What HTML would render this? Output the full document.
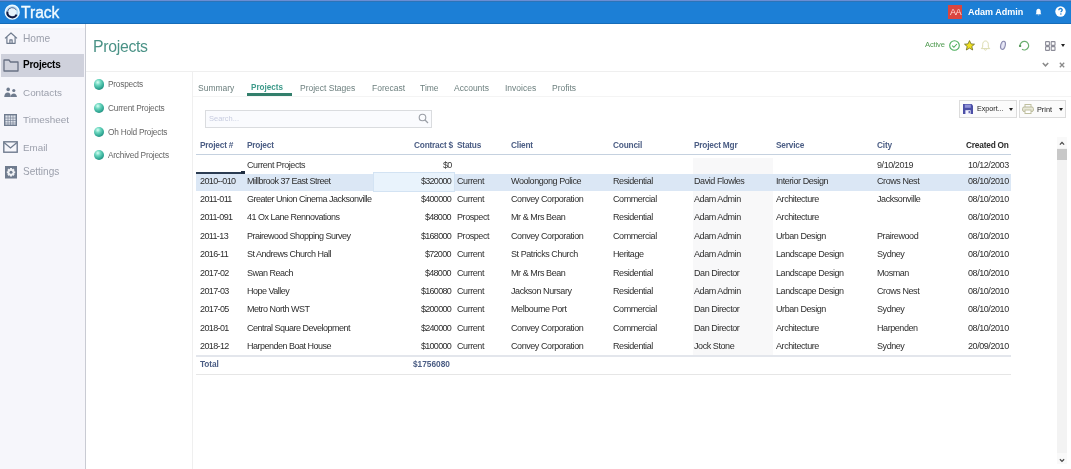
<!DOCTYPE html>
<html><head><meta charset="utf-8"><style>
html,body{margin:0;padding:0;}
body{width:1071px;height:469px;overflow:hidden;position:relative;background:#fff;font-family:"Liberation Sans", sans-serif;}
.t{position:absolute;white-space:nowrap;will-change:transform;}
.b{position:absolute;}
.ball{width:10.4px;height:10.4px;border-radius:50%;background:radial-gradient(circle at 38% 30%, #d8fff4 0%, #6ad6be 30%, #2ea592 65%, #17665e 100%);}
</style></head><body>
<div class="b" style="left:0px;top:0px;width:1071px;height:24px;background:#1c7fd6;"></div>
<div class="b" style="left:0px;top:0px;width:1071px;height:1.3px;background:#6a8ed4;"></div>
<div class="b" style="left:0px;top:1.3px;width:1071px;height:0.8px;background:#2c74b8;"></div>
<div class="b" style="left:0px;top:23px;width:1071px;height:1px;background:#156cb8;"></div>
<svg class="b" style="left:3px;top:3px" width="18" height="18" viewBox="0 0 18 18"><circle cx="9.2" cy="9.2" r="6.9" fill="#b9dcf4" stroke="#eefaff" stroke-width="1.5"/><circle cx="9.4" cy="9" r="4" fill="#e6f2fa"/><path d="M4.4 8.6 A4.9 4.9 0 0 0 13.6 11.6" stroke="#121a42" stroke-width="2" fill="none"/><path d="M4.6 8.4 A4.7 4.7 0 0 1 13.4 7.2" stroke="#3a4a7a" stroke-width="0.8" fill="none"/></svg>
<div class="t" style="left:20.5px;top:4.79px;font-size:15.6px;line-height:15.6px;color:#f2fbff;font-weight:normal;-webkit-text-stroke:0.35px #f2fbff;">Track</div>
<div class="b" style="left:948px;top:5px;width:14px;height:14px;background:#d9463f;"></div>
<div class="t" style="left:949.5px;top:7.71px;font-size:9.2px;line-height:9.2px;color:#ffd8d0;font-weight:normal;letter-spacing:-0.6px;">AA</div>
<div class="t" style="left:968px;top:7.98px;font-size:9.0px;line-height:9.0px;color:#ffffff;font-weight:bold;">Adam Admin</div>
<svg class="b" style="left:1035px;top:8px" width="7" height="8" viewBox="0 0 7 8"><path d="M3.5 0.8 C1.8 0.8 1.3 2.2 1.3 3.6 L1.3 5.2 L0.6 6.2 L6.4 6.2 L5.7 5.2 L5.7 3.6 C5.7 2.2 5.2 0.8 3.5 0.8Z M2.6 6.8 L4.4 6.8 C4.3 7.5 2.7 7.5 2.6 6.8Z" fill="#ffffff"/></svg>
<svg class="b" style="left:1055px;top:6px" width="11" height="11" viewBox="0 0 11 11"><circle cx="5.5" cy="5.5" r="5.2" fill="#ffffff"/><path d="M3.8 4.2 C3.8 3 4.6 2.5 5.5 2.5 C6.5 2.5 7.2 3.1 7.2 4 C7.2 5.1 5.9 5.2 5.9 6.3" stroke="#1a7ed3" stroke-width="1.3" fill="none"/><circle cx="5.9" cy="8.1" r="0.75" fill="#1a7ed3"/></svg>
<div class="b" style="left:0px;top:24px;width:85px;height:445px;background:#f6f6fb;"></div>
<div class="b" style="left:0px;top:24px;width:85px;height:4px;background:#fcfdff;"></div>
<div class="b" style="left:85px;top:24px;width:1px;height:445px;background:#c9cbd3;"></div>
<div class="b" style="left:1px;top:54px;width:83px;height:23px;background:#cfd1dc;"></div>
<div class="t" style="left:22.6px;top:33.57px;font-size:10.2px;line-height:10.2px;color:#9b9fab;font-weight:normal;">Home</div>
<div class="t" style="left:22.6px;top:60.33px;font-size:10px;line-height:10px;color:#000000;font-weight:bold;letter-spacing:-0.25px;">Projects</div>
<div class="t" style="left:22.6px;top:88.22px;font-size:9.9px;line-height:9.9px;color:#9b9fab;font-weight:normal;">Contacts</div>
<div class="t" style="left:22.6px;top:115.28px;font-size:9.95px;line-height:9.95px;color:#9b9fab;font-weight:normal;">Timesheet</div>
<div class="t" style="left:22.6px;top:142.90px;font-size:9.8px;line-height:9.8px;color:#9b9fab;font-weight:normal;">Email</div>
<div class="t" style="left:22.6px;top:167.19px;font-size:10.05px;line-height:10.05px;color:#9b9fab;font-weight:normal;">Settings</div>
<svg class="b" style="left:4px;top:32px" width="14" height="12" viewBox="0 0 14 12"><path d="M1 6.4 L7 1 L13 6.4 M2.9 4.8 L2.9 11.3 L11.1 11.3 L11.1 4.8 M5.9 11.3 L5.9 7.8 L8.1 7.8 L8.1 11.3" stroke="#6f7b8e" stroke-width="1.2" fill="none" stroke-linejoin="round"/></svg>
<svg class="b" style="left:3px;top:59px" width="16" height="13" viewBox="0 0 16 13"><path d="M1 1 L6 1 L7.5 3 L15 3 L15 12 L1 12 Z" stroke="#6a7184" stroke-width="1.3" fill="none" stroke-linejoin="round"/></svg>
<svg class="b" style="left:3px;top:86px" width="16" height="12" viewBox="0 0 16 12"><circle cx="5.2" cy="3.4" r="1.8" fill="#6f7b8e"/><circle cx="10.8" cy="4.5" r="1.6" fill="#6f7b8e"/><path d="M1.2 11 C1.4 8 2.8 6.6 4.8 6.6 C6.6 6.6 7.6 8 7.8 11 Z" fill="#6f7b8e"/><path d="M7.6 11 C7.9 8.6 9.2 7.6 10.8 7.6 C12.6 7.6 13.6 8.8 14 11 Z" fill="#6f7b8e"/></svg>
<svg class="b" style="left:4px;top:113.5px" width="13" height="12" viewBox="0 0 13 12"><rect x="0.7" y="0.7" width="11.6" height="10.6" fill="#dde2ea" stroke="#6f7b8e" stroke-width="1.4"/><path d="M4 1 V11 M6.5 1 V11 M9 1 V11 M1 4 H12 M1 6.5 H12 M1 9 H12" stroke="#6f7b8e" stroke-width="0.6"/></svg>
<svg class="b" style="left:3px;top:141px" width="15" height="12" viewBox="0 0 15 12"><rect x="0.8" y="0.8" width="13.4" height="10.4" fill="none" stroke="#6f7b8e" stroke-width="1.4"/><path d="M1 1.5 L7.5 7 L14 1.5" stroke="#6f7b8e" stroke-width="1.3" fill="none"/></svg>
<svg class="b" style="left:4.5px;top:166px" width="12" height="12.5" viewBox="0 0 12 12.5"><rect x="0" y="0" width="12" height="12.5" fill="#6f7b8e"/><path d="M10.20,5.31 L10.20,7.19 L8.74,7.47 L8.80,7.32 L9.63,8.55 L8.30,9.88 L7.07,9.05 L7.22,8.99 L6.94,10.45 L5.06,10.45 L4.78,8.99 L4.93,9.05 L3.70,9.88 L2.37,8.55 L3.20,7.32 L3.26,7.47 L1.80,7.19 L1.80,5.31 L3.26,5.03 L3.20,5.18 L2.37,3.95 L3.70,2.62 L4.93,3.45 L4.78,3.51 L5.06,2.05 L6.94,2.05 L7.22,3.51 L7.07,3.45 L8.30,2.62 L9.63,3.95 L8.80,5.18 L8.74,5.03Z" fill="#eef0f4"/><circle cx="6" cy="6.25" r="1.5" fill="#6f7b8e"/></svg>
<div class="t" style="left:93px;top:38.63px;font-size:15.8px;line-height:15.8px;color:#4a9286;font-weight:normal;letter-spacing:-0.3px;">Projects</div>
<div class="b" style="left:86px;top:71px;width:985px;height:1px;background:#efefef;"></div>
<div class="b" style="left:192px;top:72px;width:1px;height:397px;background:#efefef;"></div>
<div class="b ball" style="left:93.5px;top:79.3px;"></div>
<div class="t" style="left:108px;top:80.27px;font-size:8.3px;line-height:8.3px;color:#666666;font-weight:normal;letter-spacing:-0.22px;">Prospects</div>
<div class="b ball" style="left:93.5px;top:102.8px;"></div>
<div class="t" style="left:108px;top:103.77px;font-size:8.3px;line-height:8.3px;color:#666666;font-weight:normal;letter-spacing:-0.22px;">Current Projects</div>
<div class="b ball" style="left:93.5px;top:126.6px;"></div>
<div class="t" style="left:108px;top:127.57px;font-size:8.3px;line-height:8.3px;color:#666666;font-weight:normal;letter-spacing:-0.22px;">Oh Hold Projects</div>
<div class="b ball" style="left:93.5px;top:150.1px;"></div>
<div class="t" style="left:108px;top:151.07px;font-size:8.3px;line-height:8.3px;color:#666666;font-weight:normal;letter-spacing:-0.22px;">Archived Projects</div>
<div class="t" style="left:197.8px;top:84.00px;font-size:8.5px;line-height:8.5px;color:#6c7f7e;font-weight:normal;">Summary</div>
<div class="t" style="left:371.5px;top:84.00px;font-size:8.5px;line-height:8.5px;color:#6c7f7e;font-weight:normal;">Forecast</div>
<div class="t" style="left:420px;top:84.00px;font-size:8.5px;line-height:8.5px;color:#6c7f7e;font-weight:normal;">Time</div>
<div class="t" style="left:453.9px;top:84.00px;font-size:8.5px;line-height:8.5px;color:#6c7f7e;font-weight:normal;">Accounts</div>
<div class="t" style="left:505.2px;top:84.00px;font-size:8.5px;line-height:8.5px;color:#6c7f7e;font-weight:normal;">Invoices</div>
<div class="t" style="left:551.9px;top:84.00px;font-size:8.5px;line-height:8.5px;color:#6c7f7e;font-weight:normal;">Profits</div>
<div class="t" style="left:300px;top:84.00px;font-size:8.5px;line-height:8.5px;color:#6c7f7e;font-weight:normal;">Project Stages</div>
<div class="t" style="left:251px;top:84.20px;font-size:8.15px;line-height:8.15px;color:#3d9a8a;font-weight:bold;">Projects</div>
<div class="b" style="left:247px;top:93.3px;width:45px;height:2.5px;background:#337f6c;"></div>
<div class="b" style="left:193px;top:96px;width:878px;height:1px;background:#f4f4f4;"></div>
<div class="b" style="left:205px;top:110px;width:227px;height:18px;background:#fafbfe;border:1px solid #dadcdf;box-sizing:border-box;"></div>
<div class="t" style="left:209px;top:115.15px;font-size:7.5px;line-height:7.5px;color:#c8cde0;font-weight:normal;">Search...</div>
<svg class="b" style="left:418px;top:113px" width="11" height="11" viewBox="0 0 11 11"><circle cx="4.5" cy="4.5" r="3.3" stroke="#9a9ea6" stroke-width="1.1" fill="none"/><path d="M7 7 L10 10" stroke="#9a9ea6" stroke-width="1.3"/></svg>
<div class="b" style="left:959px;top:100px;width:57.5px;height:17.5px;background:#fbfbfb;border:1px solid #dcdcdc;box-sizing:border-box;"></div>
<div class="b" style="left:1019px;top:100px;width:47px;height:17.5px;background:#fbfbfb;border:1px solid #dcdcdc;box-sizing:border-box;"></div>
<svg class="b" style="left:963px;top:104px" width="10" height="10" viewBox="0 0 10 10"><path d="M0 0 H8.6 L10 1.4 V10 H0 Z" fill="#4b4fa6"/><rect x="1.8" y="0.6" width="6" height="3.2" fill="#8f92d8"/><rect x="2.4" y="6.2" width="5.2" height="3.8" fill="#f4f4ff"/><rect x="5.6" y="7" width="1.2" height="2.2" fill="#4b4fa6"/></svg>
<div class="t" style="left:976.5px;top:106.25px;font-size:7.15px;line-height:7.15px;color:#222;font-weight:normal;">Export...</div>
<div class="b" style="left:1009px;top:107.5px;width:0;height:0;border-left:2.5px solid transparent;border-right:2.5px solid transparent;border-top:3px solid #222;"></div>
<svg class="b" style="left:1022px;top:104px" width="12" height="10" viewBox="0 0 12 10"><rect x="3" y="0.5" width="6" height="3" fill="none" stroke="#bfbf9f" stroke-width="1"/><rect x="0.6" y="3" width="10.8" height="4.5" rx="1.5" fill="#e8e8d8" stroke="#b9b99a" stroke-width="1"/><rect x="3" y="6" width="6" height="3.5" fill="#fff" stroke="#bfbf9f" stroke-width="1"/></svg>
<div class="t" style="left:1036.5px;top:106.12px;font-size:7.3px;line-height:7.3px;color:#222;font-weight:normal;">Print</div>
<div class="b" style="left:1059px;top:107.5px;width:0;height:0;border-left:2.5px solid transparent;border-right:2.5px solid transparent;border-top:3px solid #222;"></div>
<div class="t" style="left:924.9px;top:41.37px;font-size:7.6px;line-height:7.6px;color:#4f9a50;font-weight:normal;letter-spacing:-0.15px;">Active</div>
<svg class="b" style="left:949px;top:40px" width="11" height="11" viewBox="0 0 11 11"><circle cx="5.5" cy="5.5" r="4.8" stroke="#4cae5c" stroke-width="1.1" fill="none"/><path d="M3.2 5.6 L4.9 7.3 L7.9 4" stroke="#4cae5c" stroke-width="1.1" fill="none"/></svg>
<svg class="b" style="left:964px;top:40px" width="11" height="11" viewBox="0 0 11 11"><path d="M5.5 0.6 L7 3.9 L10.5 4.2 L7.8 6.5 L8.7 10 L5.5 8.1 L2.3 10 L3.2 6.5 L0.5 4.2 L4 3.9 Z" fill="#f0e020" stroke="#6b6b20" stroke-width="0.8" stroke-linejoin="round"/></svg>
<svg class="b" style="left:980px;top:39.5px" width="11" height="11" viewBox="0 0 11 11"><path d="M5.5 1 C3.4 1 2.7 2.8 2.7 4.5 L2.7 7 L1.3 8.6 L9.7 8.6 L8.3 7 L8.3 4.5 C8.3 2.8 7.6 1 5.5 1Z M4.3 9.3 C4.5 10.4 6.5 10.4 6.7 9.3" stroke="#d8d8a8" stroke-width="0.9" fill="none"/></svg>
<svg class="b" style="left:999px;top:39.5px" width="9" height="11" viewBox="0 0 9 11"><ellipse cx="4" cy="5.3" rx="2.3" ry="4.2" transform="rotate(14 4 5.3)" fill="#d6d6ea" stroke="#8a8aae" stroke-width="1"/><path d="M4.5 2.4 L3.6 7.8" stroke="#f6f6ff" stroke-width="0.9"/></svg>
<svg class="b" style="left:1018px;top:40px" width="12" height="11" viewBox="0 0 12 11"><path d="M2 5.8 A4.3 4.3 0 1 1 4 9.3" stroke="#6aae6e" stroke-width="1.2" fill="none"/><circle cx="2.1" cy="5.9" r="1.2" fill="#5a9a5e"/></svg>
<svg class="b" style="left:1044.5px;top:40.5px" width="11" height="10" viewBox="0 0 11 10"><rect x="0.6" y="0.6" width="3.8" height="3.8" rx="0.5" fill="none" stroke="#8c8c98" stroke-width="1.1"/><rect x="6.2" y="0.6" width="3.8" height="3.8" rx="0.5" fill="none" stroke="#8c8c98" stroke-width="1.1"/><rect x="0.6" y="5.6" width="3.8" height="3.8" rx="0.5" fill="none" stroke="#8c8c98" stroke-width="1.1"/><rect x="6.2" y="5.6" width="3.8" height="3.8" rx="0.5" fill="none" stroke="#8c8c98" stroke-width="1.1"/></svg>
<div class="b" style="left:1061px;top:44px;width:0;height:0;border-left:2.5px solid transparent;border-right:2.5px solid transparent;border-top:3px solid #222;"></div>
<svg class="b" style="left:1042px;top:62px" width="7" height="5" viewBox="0 0 7 5"><path d="M0.8 0.9 L3.5 3.8 L6.2 0.9" stroke="#8a8a8a" stroke-width="1.5" fill="none"/></svg>
<svg class="b" style="left:1058.5px;top:62px" width="6" height="6" viewBox="0 0 6 6"><path d="M0.8 0.8 L5.2 5.2 M5.2 0.8 L0.8 5.2" stroke="#8a8a8a" stroke-width="1.3"/></svg>
<div class="t" style="left:199.7px;top:140.67px;font-size:8.3px;line-height:8.3px;color:#4b5d84;font-weight:bold;letter-spacing:-0.2px;">Project #</div>
<div class="t" style="left:247px;top:140.67px;font-size:8.3px;line-height:8.3px;color:#4b5d84;font-weight:bold;letter-spacing:-0.2px;">Project</div>
<div class="t" style="right:618.3px;top:140.67px;font-size:8.3px;line-height:8.3px;color:#4b5d84;font-weight:bold;letter-spacing:-0.2px;">Contract $</div>
<div class="t" style="left:457.4px;top:140.67px;font-size:8.3px;line-height:8.3px;color:#4b5d84;font-weight:bold;letter-spacing:-0.2px;">Status</div>
<div class="t" style="left:511.2px;top:140.67px;font-size:8.3px;line-height:8.3px;color:#4b5d84;font-weight:bold;letter-spacing:-0.2px;">Client</div>
<div class="t" style="left:612.9px;top:140.67px;font-size:8.3px;line-height:8.3px;color:#4b5d84;font-weight:bold;letter-spacing:-0.2px;">Council</div>
<div class="t" style="left:694.3px;top:140.67px;font-size:8.3px;line-height:8.3px;color:#4b5d84;font-weight:bold;letter-spacing:-0.2px;">Project Mgr</div>
<div class="t" style="left:775.6px;top:140.67px;font-size:8.3px;line-height:8.3px;color:#4b5d84;font-weight:bold;letter-spacing:-0.2px;">Service</div>
<div class="t" style="left:877.2px;top:140.67px;font-size:8.3px;line-height:8.3px;color:#4b5d84;font-weight:bold;letter-spacing:-0.2px;">City</div>
<div class="t" style="right:62.5px;top:140.67px;font-size:8.3px;line-height:8.3px;color:#2a2a2a;font-weight:bold;letter-spacing:-0.2px;">Created On</div>
<div class="b" style="left:196px;top:154px;width:814.5px;height:1px;background:#c5d1df;"></div>
<div class="b" style="left:692.5px;top:157.5px;width:80px;height:197.5px;background:#f8f8f9;"></div>
<div class="t" style="left:247px;top:160.98px;font-size:9.0px;line-height:9.0px;color:#333;font-weight:normal;letter-spacing:-0.43px;">Current Projects</div>
<div class="t" style="right:619.8px;top:160.98px;font-size:9.0px;line-height:9.0px;color:#333;font-weight:normal;letter-spacing:-0.72px;">$0</div>
<div class="t" style="left:877.2px;top:160.98px;font-size:9.0px;line-height:9.0px;color:#333;font-weight:normal;letter-spacing:-0.43px;">9/10/2019</div>
<div class="t" style="right:62.200000000000045px;top:160.98px;font-size:9.0px;line-height:9.0px;color:#333;font-weight:normal;letter-spacing:-0.43px;">10/12/2003</div>
<div class="b" style="left:196px;top:172.3px;width:46px;height:1.6px;background:#2b3c52;"></div>
<div class="b" style="left:241px;top:170.6px;width:3.5px;height:3.5px;background:#1f2d40;"></div>
<div class="b" style="left:196px;top:174px;width:814.5px;height:17.3px;background:#dbe7f5;"></div>
<div class="b" style="left:373px;top:172px;width:81.5px;height:19.8px;background:#e9f3fc;border:1px solid #d3e3f3;box-sizing:border-box;"></div>
<div class="t" style="left:199.7px;top:176.68px;font-size:9.0px;line-height:9.0px;color:#2e2e2e;font-weight:normal;letter-spacing:-0.62px;">2010--010</div>
<div class="t" style="left:247px;top:176.68px;font-size:9.0px;line-height:9.0px;color:#2e2e2e;font-weight:normal;letter-spacing:-0.5px;">Millbrook 37 East Street</div>
<div class="t" style="right:619.8px;top:176.68px;font-size:9.0px;line-height:9.0px;color:#2e2e2e;font-weight:normal;letter-spacing:-0.72px;">$320000</div>
<div class="t" style="left:457.4px;top:176.68px;font-size:9.0px;line-height:9.0px;color:#2e2e2e;font-weight:normal;letter-spacing:-0.43px;">Current</div>
<div class="t" style="left:511.2px;top:176.68px;font-size:9.0px;line-height:9.0px;color:#2e2e2e;font-weight:normal;letter-spacing:-0.43px;">Woolongong Police</div>
<div class="t" style="left:612.9px;top:176.68px;font-size:9.0px;line-height:9.0px;color:#2e2e2e;font-weight:normal;letter-spacing:-0.43px;">Residential</div>
<div class="t" style="left:694.3px;top:176.68px;font-size:9.0px;line-height:9.0px;color:#2e2e2e;font-weight:normal;letter-spacing:-0.43px;">David Flowles</div>
<div class="t" style="left:775.6px;top:176.68px;font-size:9.0px;line-height:9.0px;color:#2e2e2e;font-weight:normal;letter-spacing:-0.43px;">Interior Design</div>
<div class="t" style="left:877.2px;top:176.68px;font-size:9.0px;line-height:9.0px;color:#2e2e2e;font-weight:normal;letter-spacing:-0.43px;">Crows Nest</div>
<div class="t" style="right:62.200000000000045px;top:176.68px;font-size:9.0px;line-height:9.0px;color:#2e2e2e;font-weight:normal;letter-spacing:-0.43px;">08/10/2010</div>
<div class="t" style="left:199.7px;top:195.06px;font-size:9.0px;line-height:9.0px;color:#2e2e2e;font-weight:normal;letter-spacing:-0.62px;">2011-011</div>
<div class="t" style="left:247px;top:195.06px;font-size:9.0px;line-height:9.0px;color:#2e2e2e;font-weight:normal;letter-spacing:-0.5px;">Greater Union Cinema Jacksonville</div>
<div class="t" style="right:619.8px;top:195.06px;font-size:9.0px;line-height:9.0px;color:#2e2e2e;font-weight:normal;letter-spacing:-0.72px;">$400000</div>
<div class="t" style="left:457.4px;top:195.06px;font-size:9.0px;line-height:9.0px;color:#2e2e2e;font-weight:normal;letter-spacing:-0.43px;">Current</div>
<div class="t" style="left:511.2px;top:195.06px;font-size:9.0px;line-height:9.0px;color:#2e2e2e;font-weight:normal;letter-spacing:-0.43px;">Convey Corporation</div>
<div class="t" style="left:612.9px;top:195.06px;font-size:9.0px;line-height:9.0px;color:#2e2e2e;font-weight:normal;letter-spacing:-0.43px;">Commercial</div>
<div class="t" style="left:694.3px;top:195.06px;font-size:9.0px;line-height:9.0px;color:#2e2e2e;font-weight:normal;letter-spacing:-0.43px;">Adam Admin</div>
<div class="t" style="left:775.6px;top:195.06px;font-size:9.0px;line-height:9.0px;color:#2e2e2e;font-weight:normal;letter-spacing:-0.43px;">Architecture</div>
<div class="t" style="left:877.2px;top:195.06px;font-size:9.0px;line-height:9.0px;color:#2e2e2e;font-weight:normal;letter-spacing:-0.43px;">Jacksonville</div>
<div class="t" style="right:62.200000000000045px;top:195.06px;font-size:9.0px;line-height:9.0px;color:#2e2e2e;font-weight:normal;letter-spacing:-0.43px;">08/10/2010</div>
<div class="t" style="left:199.7px;top:213.44px;font-size:9.0px;line-height:9.0px;color:#2e2e2e;font-weight:normal;letter-spacing:-0.62px;">2011-091</div>
<div class="t" style="left:247px;top:213.44px;font-size:9.0px;line-height:9.0px;color:#2e2e2e;font-weight:normal;letter-spacing:-0.5px;">41 Ox Lane Rennovations</div>
<div class="t" style="right:619.8px;top:213.44px;font-size:9.0px;line-height:9.0px;color:#2e2e2e;font-weight:normal;letter-spacing:-0.72px;">$48000</div>
<div class="t" style="left:457.4px;top:213.44px;font-size:9.0px;line-height:9.0px;color:#2e2e2e;font-weight:normal;letter-spacing:-0.43px;">Prospect</div>
<div class="t" style="left:511.2px;top:213.44px;font-size:9.0px;line-height:9.0px;color:#2e2e2e;font-weight:normal;letter-spacing:-0.43px;">Mr &amp; Mrs Bean</div>
<div class="t" style="left:612.9px;top:213.44px;font-size:9.0px;line-height:9.0px;color:#2e2e2e;font-weight:normal;letter-spacing:-0.43px;">Residential</div>
<div class="t" style="left:694.3px;top:213.44px;font-size:9.0px;line-height:9.0px;color:#2e2e2e;font-weight:normal;letter-spacing:-0.43px;">Adam Admin</div>
<div class="t" style="left:775.6px;top:213.44px;font-size:9.0px;line-height:9.0px;color:#2e2e2e;font-weight:normal;letter-spacing:-0.43px;">Architecture</div>
<div class="t" style="left:877.2px;top:213.44px;font-size:9.0px;line-height:9.0px;color:#2e2e2e;font-weight:normal;letter-spacing:-0.43px;"></div>
<div class="t" style="right:62.200000000000045px;top:213.44px;font-size:9.0px;line-height:9.0px;color:#2e2e2e;font-weight:normal;letter-spacing:-0.43px;">08/10/2010</div>
<div class="t" style="left:199.7px;top:231.82px;font-size:9.0px;line-height:9.0px;color:#2e2e2e;font-weight:normal;letter-spacing:-0.62px;">2011-13</div>
<div class="t" style="left:247px;top:231.82px;font-size:9.0px;line-height:9.0px;color:#2e2e2e;font-weight:normal;letter-spacing:-0.5px;">Prairewood Shopping Survey</div>
<div class="t" style="right:619.8px;top:231.82px;font-size:9.0px;line-height:9.0px;color:#2e2e2e;font-weight:normal;letter-spacing:-0.72px;">$168000</div>
<div class="t" style="left:457.4px;top:231.82px;font-size:9.0px;line-height:9.0px;color:#2e2e2e;font-weight:normal;letter-spacing:-0.43px;">Prospect</div>
<div class="t" style="left:511.2px;top:231.82px;font-size:9.0px;line-height:9.0px;color:#2e2e2e;font-weight:normal;letter-spacing:-0.43px;">Convey Corporation</div>
<div class="t" style="left:612.9px;top:231.82px;font-size:9.0px;line-height:9.0px;color:#2e2e2e;font-weight:normal;letter-spacing:-0.43px;">Commercial</div>
<div class="t" style="left:694.3px;top:231.82px;font-size:9.0px;line-height:9.0px;color:#2e2e2e;font-weight:normal;letter-spacing:-0.43px;">Adam Admin</div>
<div class="t" style="left:775.6px;top:231.82px;font-size:9.0px;line-height:9.0px;color:#2e2e2e;font-weight:normal;letter-spacing:-0.43px;">Urban Design</div>
<div class="t" style="left:877.2px;top:231.82px;font-size:9.0px;line-height:9.0px;color:#2e2e2e;font-weight:normal;letter-spacing:-0.43px;">Prairewood</div>
<div class="t" style="right:62.200000000000045px;top:231.82px;font-size:9.0px;line-height:9.0px;color:#2e2e2e;font-weight:normal;letter-spacing:-0.43px;">08/10/2010</div>
<div class="t" style="left:199.7px;top:250.20px;font-size:9.0px;line-height:9.0px;color:#2e2e2e;font-weight:normal;letter-spacing:-0.62px;">2016-11</div>
<div class="t" style="left:247px;top:250.20px;font-size:9.0px;line-height:9.0px;color:#2e2e2e;font-weight:normal;letter-spacing:-0.5px;">St Andrews Church Hall</div>
<div class="t" style="right:619.8px;top:250.20px;font-size:9.0px;line-height:9.0px;color:#2e2e2e;font-weight:normal;letter-spacing:-0.72px;">$72000</div>
<div class="t" style="left:457.4px;top:250.20px;font-size:9.0px;line-height:9.0px;color:#2e2e2e;font-weight:normal;letter-spacing:-0.43px;">Current</div>
<div class="t" style="left:511.2px;top:250.20px;font-size:9.0px;line-height:9.0px;color:#2e2e2e;font-weight:normal;letter-spacing:-0.43px;">St Patricks Church</div>
<div class="t" style="left:612.9px;top:250.20px;font-size:9.0px;line-height:9.0px;color:#2e2e2e;font-weight:normal;letter-spacing:-0.43px;">Heritage</div>
<div class="t" style="left:694.3px;top:250.20px;font-size:9.0px;line-height:9.0px;color:#2e2e2e;font-weight:normal;letter-spacing:-0.43px;">Adam Admin</div>
<div class="t" style="left:775.6px;top:250.20px;font-size:9.0px;line-height:9.0px;color:#2e2e2e;font-weight:normal;letter-spacing:-0.43px;">Landscape Design</div>
<div class="t" style="left:877.2px;top:250.20px;font-size:9.0px;line-height:9.0px;color:#2e2e2e;font-weight:normal;letter-spacing:-0.43px;">Sydney</div>
<div class="t" style="right:62.200000000000045px;top:250.20px;font-size:9.0px;line-height:9.0px;color:#2e2e2e;font-weight:normal;letter-spacing:-0.43px;">08/10/2010</div>
<div class="t" style="left:199.7px;top:268.58px;font-size:9.0px;line-height:9.0px;color:#2e2e2e;font-weight:normal;letter-spacing:-0.62px;">2017-02</div>
<div class="t" style="left:247px;top:268.58px;font-size:9.0px;line-height:9.0px;color:#2e2e2e;font-weight:normal;letter-spacing:-0.5px;">Swan Reach</div>
<div class="t" style="right:619.8px;top:268.58px;font-size:9.0px;line-height:9.0px;color:#2e2e2e;font-weight:normal;letter-spacing:-0.72px;">$48000</div>
<div class="t" style="left:457.4px;top:268.58px;font-size:9.0px;line-height:9.0px;color:#2e2e2e;font-weight:normal;letter-spacing:-0.43px;">Current</div>
<div class="t" style="left:511.2px;top:268.58px;font-size:9.0px;line-height:9.0px;color:#2e2e2e;font-weight:normal;letter-spacing:-0.43px;">Mr &amp; Mrs Bean</div>
<div class="t" style="left:612.9px;top:268.58px;font-size:9.0px;line-height:9.0px;color:#2e2e2e;font-weight:normal;letter-spacing:-0.43px;">Residential</div>
<div class="t" style="left:694.3px;top:268.58px;font-size:9.0px;line-height:9.0px;color:#2e2e2e;font-weight:normal;letter-spacing:-0.43px;">Dan Director</div>
<div class="t" style="left:775.6px;top:268.58px;font-size:9.0px;line-height:9.0px;color:#2e2e2e;font-weight:normal;letter-spacing:-0.43px;">Landscape Design</div>
<div class="t" style="left:877.2px;top:268.58px;font-size:9.0px;line-height:9.0px;color:#2e2e2e;font-weight:normal;letter-spacing:-0.43px;">Mosman</div>
<div class="t" style="right:62.200000000000045px;top:268.58px;font-size:9.0px;line-height:9.0px;color:#2e2e2e;font-weight:normal;letter-spacing:-0.43px;">08/10/2010</div>
<div class="t" style="left:199.7px;top:286.96px;font-size:9.0px;line-height:9.0px;color:#2e2e2e;font-weight:normal;letter-spacing:-0.62px;">2017-03</div>
<div class="t" style="left:247px;top:286.96px;font-size:9.0px;line-height:9.0px;color:#2e2e2e;font-weight:normal;letter-spacing:-0.5px;">Hope Valley</div>
<div class="t" style="right:619.8px;top:286.96px;font-size:9.0px;line-height:9.0px;color:#2e2e2e;font-weight:normal;letter-spacing:-0.72px;">$160080</div>
<div class="t" style="left:457.4px;top:286.96px;font-size:9.0px;line-height:9.0px;color:#2e2e2e;font-weight:normal;letter-spacing:-0.43px;">Current</div>
<div class="t" style="left:511.2px;top:286.96px;font-size:9.0px;line-height:9.0px;color:#2e2e2e;font-weight:normal;letter-spacing:-0.43px;">Jackson Nursary</div>
<div class="t" style="left:612.9px;top:286.96px;font-size:9.0px;line-height:9.0px;color:#2e2e2e;font-weight:normal;letter-spacing:-0.43px;">Residential</div>
<div class="t" style="left:694.3px;top:286.96px;font-size:9.0px;line-height:9.0px;color:#2e2e2e;font-weight:normal;letter-spacing:-0.43px;">Adam Admin</div>
<div class="t" style="left:775.6px;top:286.96px;font-size:9.0px;line-height:9.0px;color:#2e2e2e;font-weight:normal;letter-spacing:-0.43px;">Landscape Design</div>
<div class="t" style="left:877.2px;top:286.96px;font-size:9.0px;line-height:9.0px;color:#2e2e2e;font-weight:normal;letter-spacing:-0.43px;">Crows Nest</div>
<div class="t" style="right:62.200000000000045px;top:286.96px;font-size:9.0px;line-height:9.0px;color:#2e2e2e;font-weight:normal;letter-spacing:-0.43px;">08/10/2010</div>
<div class="t" style="left:199.7px;top:305.34px;font-size:9.0px;line-height:9.0px;color:#2e2e2e;font-weight:normal;letter-spacing:-0.62px;">2017-05</div>
<div class="t" style="left:247px;top:305.34px;font-size:9.0px;line-height:9.0px;color:#2e2e2e;font-weight:normal;letter-spacing:-0.5px;">Metro North WST</div>
<div class="t" style="right:619.8px;top:305.34px;font-size:9.0px;line-height:9.0px;color:#2e2e2e;font-weight:normal;letter-spacing:-0.72px;">$200000</div>
<div class="t" style="left:457.4px;top:305.34px;font-size:9.0px;line-height:9.0px;color:#2e2e2e;font-weight:normal;letter-spacing:-0.43px;">Current</div>
<div class="t" style="left:511.2px;top:305.34px;font-size:9.0px;line-height:9.0px;color:#2e2e2e;font-weight:normal;letter-spacing:-0.43px;">Melbourne Port</div>
<div class="t" style="left:612.9px;top:305.34px;font-size:9.0px;line-height:9.0px;color:#2e2e2e;font-weight:normal;letter-spacing:-0.43px;">Commercial</div>
<div class="t" style="left:694.3px;top:305.34px;font-size:9.0px;line-height:9.0px;color:#2e2e2e;font-weight:normal;letter-spacing:-0.43px;">Dan Director</div>
<div class="t" style="left:775.6px;top:305.34px;font-size:9.0px;line-height:9.0px;color:#2e2e2e;font-weight:normal;letter-spacing:-0.43px;">Urban Design</div>
<div class="t" style="left:877.2px;top:305.34px;font-size:9.0px;line-height:9.0px;color:#2e2e2e;font-weight:normal;letter-spacing:-0.43px;">Sydney</div>
<div class="t" style="right:62.200000000000045px;top:305.34px;font-size:9.0px;line-height:9.0px;color:#2e2e2e;font-weight:normal;letter-spacing:-0.43px;">08/10/2010</div>
<div class="t" style="left:199.7px;top:323.72px;font-size:9.0px;line-height:9.0px;color:#2e2e2e;font-weight:normal;letter-spacing:-0.62px;">2018-01</div>
<div class="t" style="left:247px;top:323.72px;font-size:9.0px;line-height:9.0px;color:#2e2e2e;font-weight:normal;letter-spacing:-0.5px;">Central Square Development</div>
<div class="t" style="right:619.8px;top:323.72px;font-size:9.0px;line-height:9.0px;color:#2e2e2e;font-weight:normal;letter-spacing:-0.72px;">$240000</div>
<div class="t" style="left:457.4px;top:323.72px;font-size:9.0px;line-height:9.0px;color:#2e2e2e;font-weight:normal;letter-spacing:-0.43px;">Current</div>
<div class="t" style="left:511.2px;top:323.72px;font-size:9.0px;line-height:9.0px;color:#2e2e2e;font-weight:normal;letter-spacing:-0.43px;">Convey Corporation</div>
<div class="t" style="left:612.9px;top:323.72px;font-size:9.0px;line-height:9.0px;color:#2e2e2e;font-weight:normal;letter-spacing:-0.43px;">Commercial</div>
<div class="t" style="left:694.3px;top:323.72px;font-size:9.0px;line-height:9.0px;color:#2e2e2e;font-weight:normal;letter-spacing:-0.43px;">Dan Director</div>
<div class="t" style="left:775.6px;top:323.72px;font-size:9.0px;line-height:9.0px;color:#2e2e2e;font-weight:normal;letter-spacing:-0.43px;">Architecture</div>
<div class="t" style="left:877.2px;top:323.72px;font-size:9.0px;line-height:9.0px;color:#2e2e2e;font-weight:normal;letter-spacing:-0.43px;">Harpenden</div>
<div class="t" style="right:62.200000000000045px;top:323.72px;font-size:9.0px;line-height:9.0px;color:#2e2e2e;font-weight:normal;letter-spacing:-0.43px;">08/10/2010</div>
<div class="t" style="left:199.7px;top:342.10px;font-size:9.0px;line-height:9.0px;color:#2e2e2e;font-weight:normal;letter-spacing:-0.62px;">2018-12</div>
<div class="t" style="left:247px;top:342.10px;font-size:9.0px;line-height:9.0px;color:#2e2e2e;font-weight:normal;letter-spacing:-0.5px;">Harpenden Boat House</div>
<div class="t" style="right:619.8px;top:342.10px;font-size:9.0px;line-height:9.0px;color:#2e2e2e;font-weight:normal;letter-spacing:-0.72px;">$100000</div>
<div class="t" style="left:457.4px;top:342.10px;font-size:9.0px;line-height:9.0px;color:#2e2e2e;font-weight:normal;letter-spacing:-0.43px;">Current</div>
<div class="t" style="left:511.2px;top:342.10px;font-size:9.0px;line-height:9.0px;color:#2e2e2e;font-weight:normal;letter-spacing:-0.43px;">Convey Corporation</div>
<div class="t" style="left:612.9px;top:342.10px;font-size:9.0px;line-height:9.0px;color:#2e2e2e;font-weight:normal;letter-spacing:-0.43px;">Residential</div>
<div class="t" style="left:694.3px;top:342.10px;font-size:9.0px;line-height:9.0px;color:#2e2e2e;font-weight:normal;letter-spacing:-0.43px;">Jock Stone</div>
<div class="t" style="left:775.6px;top:342.10px;font-size:9.0px;line-height:9.0px;color:#2e2e2e;font-weight:normal;letter-spacing:-0.43px;">Architecture</div>
<div class="t" style="left:877.2px;top:342.10px;font-size:9.0px;line-height:9.0px;color:#2e2e2e;font-weight:normal;letter-spacing:-0.43px;">Sydney</div>
<div class="t" style="right:62.200000000000045px;top:342.10px;font-size:9.0px;line-height:9.0px;color:#2e2e2e;font-weight:normal;letter-spacing:-0.43px;">20/09/2010</div>
<div class="b" style="left:196px;top:355px;width:815px;height:1.5px;background:#e3e6ec;"></div>
<div class="t" style="left:199.7px;top:359.87px;font-size:8.3px;line-height:8.3px;color:#4b5d84;font-weight:bold;letter-spacing:-0.1px;">Total</div>
<div class="t" style="right:620.7px;top:359.87px;font-size:8.3px;line-height:8.3px;color:#4b5d84;font-weight:bold;">$1756080</div>
<div class="b" style="left:196px;top:373.8px;width:815px;height:1px;background:#e6e6e6;"></div>
<div class="b" style="left:1056.5px;top:137px;width:10.5px;height:327px;background:#f3f3f3;"></div>
<div class="b" style="left:1056.5px;top:137px;width:10.5px;height:11px;background:#f9f9f9;"></div>
<div class="b" style="left:1056.5px;top:453px;width:10.5px;height:11px;background:#f9f9f9;"></div>
<div class="b" style="left:1056.5px;top:148.5px;width:10.5px;height:11.5px;background:#c8c8c8;"></div>
<svg class="b" style="left:1058.5px;top:141px" width="6" height="5" viewBox="0 0 6 5"><path d="M0.9 3.6 L3 1.4 L5.1 3.6" stroke="#4a4a4a" stroke-width="1.3" fill="none"/></svg>
<svg class="b" style="left:1058.5px;top:458px" width="6" height="5" viewBox="0 0 6 5"><path d="M0.9 1.2 L3 3.4 L5.1 1.2" stroke="#4a4a4a" stroke-width="1.3" fill="none"/></svg>
</body></html>
